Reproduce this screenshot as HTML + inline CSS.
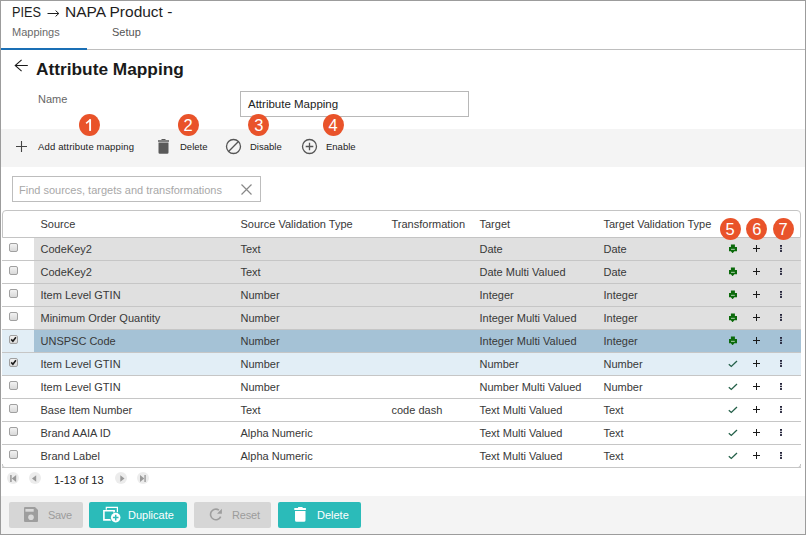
<!DOCTYPE html>
<html><head><meta charset="utf-8">
<style>
*{margin:0;padding:0;box-sizing:border-box}
html,body{width:806px;height:535px;overflow:hidden;background:#fff}
body{position:relative;font-family:"Liberation Sans",sans-serif;color:#333}
.a{position:absolute;white-space:nowrap;line-height:1}
.frame{position:absolute;left:0;top:0;width:806px;height:535px;border:1px solid #9c9c9c;z-index:50}
.badge{position:absolute;width:21px;height:21.8px;border-radius:50%;background:#e9532a;color:#fff;font-size:16.5px;line-height:23px;text-align:center;z-index:20}
.tb{font-size:9.5px;color:#222}
.bg{position:absolute;height:22px}
.dv{position:absolute;left:2px;width:799px;height:1px;background:#c6c6c6}
.cb{position:absolute;left:9px;width:9px;height:9px;border:1px solid #a0a0a0;border-radius:2px;background:linear-gradient(#f2f2f2,#d9d9d9)}
.cell{position:absolute;font-size:11px;line-height:1;white-space:nowrap;color:#383838}
.ic{position:absolute}
.btn{position:absolute;top:502px;height:26px;border-radius:2px}
.pg{position:absolute;top:472px;width:12px;height:12px;border-radius:50%;background:#ececec}
</style></head><body>
<div class="frame"></div>

<!-- header -->
<div class="a" style="left:11.7px;top:4.3px;font-size:15.5px;color:#1e1e1e;transform:scaleX(0.82);transform-origin:0 0">PIES</div>
<svg class="ic" style="left:47px;top:10px" width="13" height="7" viewBox="0 0 13 7"><path d="M0.5 3.5H11.8M8.6 0.6L11.8 3.5L8.6 6.4" fill="none" stroke="#1e1e1e" stroke-width="1"/></svg>
<div class="a" style="left:65px;top:4.3px;font-size:15.5px;color:#1e1e1e">NAPA Product -</div>
<div class="a" style="left:12px;top:26.9px;font-size:11px;color:#6a6a6a">Mappings</div>
<div class="a" style="left:112px;top:26.9px;font-size:11px;color:#555">Setup</div>
<div style="position:absolute;left:1px;top:49px;width:804px;height:1px;background:#bebebe"></div>
<div style="position:absolute;left:1px;top:48px;width:86px;height:2px;background:#1a6fb5"></div>

<!-- title -->
<svg class="ic" style="left:14px;top:59px" width="15" height="13" viewBox="0 0 15 13"><path d="M1.2 6.5H13.8M7.6 0.8L1.2 6.5L7.6 12.2" fill="none" stroke="#1a1a1a" stroke-width="1.05"/></svg>
<div class="a" style="left:36px;top:60.6px;font-size:17.3px;font-weight:bold;color:#1a1a1a">Attribute Mapping</div>
<div class="a" style="left:38px;top:93.7px;font-size:11px;color:#666">Name</div>
<div style="position:absolute;left:240px;top:91px;width:229px;height:26px;border:1px solid #b8b8b8"></div>
<div class="a" style="left:248px;top:98.6px;font-size:11.5px;color:#222">Attribute Mapping</div>

<!-- toolbar -->
<div style="position:absolute;left:1px;top:129px;width:804px;height:38px;background:#f4f4f4"></div>
<svg class="ic" style="left:16px;top:141px" width="11" height="11" viewBox="0 0 11 11"><path d="M5.5 0V11M0 5.5H11" stroke="#444" stroke-width="1.1"/></svg>
<div class="a tb" style="left:38px;top:142px;letter-spacing:0.15px">Add attribute mapping</div>
<svg class="ic" style="left:157px;top:138px" width="13" height="16" viewBox="0 0 13 16"><path d="M4.5 1H8.5V2H4.5Z M1 2.2H12V3.8H1Z M1.5 4.5H11.5V14.5Q11.5 15.8 10.2 15.8H2.8Q1.5 15.8 1.5 14.5Z" fill="#595959"/></svg>
<div class="a tb" style="left:180px;top:142px">Delete</div>
<svg class="ic" style="left:225px;top:138px" width="17" height="17" viewBox="0 0 17 17"><circle cx="8.5" cy="8.5" r="7" fill="none" stroke="#555" stroke-width="1.3"/><path d="M3.8 13.2L13.2 3.8" stroke="#555" stroke-width="1.3"/></svg>
<div class="a tb" style="left:250px;top:142px">Disable</div>
<svg class="ic" style="left:301px;top:138px" width="17" height="17" viewBox="0 0 17 17"><circle cx="8.5" cy="8.5" r="7" fill="none" stroke="#555" stroke-width="1.3"/><path d="M8.5 4.7V12.3M4.7 8.5H12.3" stroke="#555" stroke-width="1.3"/></svg>
<div class="a tb" style="left:326px;top:142px">Enable</div>

<div class="badge" style="left:78.5px;top:114.39999999999999px"><svg style="position:absolute;left:0;top:0" width="21" height="22" viewBox="0 0 21 22"><path d="M11.1 5.3V16.9" stroke="#fff" stroke-width="1.9"/><path d="M7.1 9.4L11.6 5.6" stroke="#fff" stroke-width="1.6"/></svg></div>
<div class="badge" style="left:177.7px;top:114.39999999999999px">2</div>
<div class="badge" style="left:248.3px;top:114.39999999999999px">3</div>
<div class="badge" style="left:322.5px;top:114.39999999999999px">4</div>

<!-- search -->
<div style="position:absolute;left:12px;top:176px;width:249px;height:26px;border:1px solid #bdbdbd"></div>
<div class="a" style="left:19px;top:184.7px;font-size:11px;color:#a8a8a8">Find sources, targets and transformations</div>
<svg class="ic" style="left:241px;top:184px" width="11" height="11" viewBox="0 0 11 11"><path d="M0.5 0.5L10.5 10.5M10.5 0.5L0.5 10.5" stroke="#888" stroke-width="1.2"/></svg>

<!-- table -->
<div style="position:absolute;left:2px;top:210px;width:799px;height:28px;border:1px solid #c4c4c4;border-radius:4px 4px 0 0"></div>
<div class="cell" style="left:40.5px;top:218.7px">Source</div>
<div class="cell" style="left:240.5px;top:218.7px">Source Validation Type</div>
<div class="cell" style="left:391.5px;top:218.7px">Transformation</div>
<div class="cell" style="left:479.5px;top:218.7px">Target</div>
<div class="cell" style="left:603.5px;top:218.7px">Target Validation Type</div>

<div class="bg" style="left:34px;top:238px;width:767px;background:#e0e0e0"></div>
<div class="dv" style="top:260px"></div>
<div class="cb" style="top:243px"></div>
<div class="cell" style="left:40.5px;top:244.2px">CodeKey2</div>
<div class="cell" style="left:240.5px;top:244.2px">Text</div>
<div class="cell" style="left:479.5px;top:244.2px">Date</div>
<div class="cell" style="left:603.5px;top:244.2px">Date</div>
<svg class="ic" style="left:729px;top:244px" width="9" height="10" viewBox="0 0 9 10"><path d="M1.9 0.5H5.9V2.9H8V7.2H5.3L3.9 9H3.3L1.9 7.2H0V2.9H1.9Z" fill="#0b6a0b"/><rect x="2" y="4.8" width="3.8" height="1.2" fill="#fff" fill-opacity="0.55"/></svg>
<div class="ic" style="left:756px;top:245px;width:1px;height:7px;background:#1a1a1a"></div><div class="ic" style="left:753px;top:248px;width:7px;height:1px;background:#1a1a1a"></div>
<svg class="ic" style="left:780px;top:245px" width="2" height="7" viewBox="0 0 2 7"><rect x="0" y="0" width="2" height="1.8" fill="#24243a"/><rect x="0" y="2.7" width="2" height="1.5" fill="#24243a"/><rect x="0" y="5.1" width="2" height="1.8" fill="#24243a"/></svg>
<div class="bg" style="left:34px;top:261px;width:767px;background:#e0e0e0"></div>
<div class="dv" style="top:283px"></div>
<div class="cb" style="top:266px"></div>
<div class="cell" style="left:40.5px;top:267.2px">CodeKey2</div>
<div class="cell" style="left:240.5px;top:267.2px">Text</div>
<div class="cell" style="left:479.5px;top:267.2px">Date Multi Valued</div>
<div class="cell" style="left:603.5px;top:267.2px">Date</div>
<svg class="ic" style="left:729px;top:267px" width="9" height="10" viewBox="0 0 9 10"><path d="M1.9 0.5H5.9V2.9H8V7.2H5.3L3.9 9H3.3L1.9 7.2H0V2.9H1.9Z" fill="#0b6a0b"/><rect x="2" y="4.8" width="3.8" height="1.2" fill="#fff" fill-opacity="0.55"/></svg>
<div class="ic" style="left:756px;top:268px;width:1px;height:7px;background:#1a1a1a"></div><div class="ic" style="left:753px;top:271px;width:7px;height:1px;background:#1a1a1a"></div>
<svg class="ic" style="left:780px;top:268px" width="2" height="7" viewBox="0 0 2 7"><rect x="0" y="0" width="2" height="1.8" fill="#24243a"/><rect x="0" y="2.7" width="2" height="1.5" fill="#24243a"/><rect x="0" y="5.1" width="2" height="1.8" fill="#24243a"/></svg>
<div class="bg" style="left:34px;top:284px;width:767px;background:#e0e0e0"></div>
<div class="dv" style="top:306px"></div>
<div class="cb" style="top:289px"></div>
<div class="cell" style="left:40.5px;top:290.2px">Item Level GTIN</div>
<div class="cell" style="left:240.5px;top:290.2px">Number</div>
<div class="cell" style="left:479.5px;top:290.2px">Integer</div>
<div class="cell" style="left:603.5px;top:290.2px">Integer</div>
<svg class="ic" style="left:729px;top:290px" width="9" height="10" viewBox="0 0 9 10"><path d="M1.9 0.5H5.9V2.9H8V7.2H5.3L3.9 9H3.3L1.9 7.2H0V2.9H1.9Z" fill="#0b6a0b"/><rect x="2" y="4.8" width="3.8" height="1.2" fill="#fff" fill-opacity="0.55"/></svg>
<div class="ic" style="left:756px;top:291px;width:1px;height:7px;background:#1a1a1a"></div><div class="ic" style="left:753px;top:294px;width:7px;height:1px;background:#1a1a1a"></div>
<svg class="ic" style="left:780px;top:291px" width="2" height="7" viewBox="0 0 2 7"><rect x="0" y="0" width="2" height="1.8" fill="#24243a"/><rect x="0" y="2.7" width="2" height="1.5" fill="#24243a"/><rect x="0" y="5.1" width="2" height="1.8" fill="#24243a"/></svg>
<div class="bg" style="left:34px;top:307px;width:767px;background:#e0e0e0"></div>
<div class="dv" style="top:329px"></div>
<div class="cb" style="top:312px"></div>
<div class="cell" style="left:40.5px;top:313.2px">Minimum Order Quantity</div>
<div class="cell" style="left:240.5px;top:313.2px">Number</div>
<div class="cell" style="left:479.5px;top:313.2px">Integer Multi Valued</div>
<div class="cell" style="left:603.5px;top:313.2px">Integer</div>
<svg class="ic" style="left:729px;top:313px" width="9" height="10" viewBox="0 0 9 10"><path d="M1.9 0.5H5.9V2.9H8V7.2H5.3L3.9 9H3.3L1.9 7.2H0V2.9H1.9Z" fill="#0b6a0b"/><rect x="2" y="4.8" width="3.8" height="1.2" fill="#fff" fill-opacity="0.55"/></svg>
<div class="ic" style="left:756px;top:314px;width:1px;height:7px;background:#1a1a1a"></div><div class="ic" style="left:753px;top:317px;width:7px;height:1px;background:#1a1a1a"></div>
<svg class="ic" style="left:780px;top:314px" width="2" height="7" viewBox="0 0 2 7"><rect x="0" y="0" width="2" height="1.8" fill="#24243a"/><rect x="0" y="2.7" width="2" height="1.5" fill="#24243a"/><rect x="0" y="5.1" width="2" height="1.8" fill="#24243a"/></svg>
<div class="bg" style="left:2px;top:330px;width:32px;background:#e2eef6"></div>
<div class="bg" style="left:34px;top:330px;width:767px;background:#a5c2d6"></div>
<div class="dv" style="top:352px"></div>
<div class="cb" style="top:335px"><svg style="position:absolute;left:0;top:0" width="7" height="7" viewBox="0 0 7 7"><path d="M1.2 3.4L2.9 5.2L5.9 1.2" fill="none" stroke="#1a1a1a" stroke-width="1.6"/></svg></div>
<div class="cell" style="left:40.5px;top:336.2px">UNSPSC Code</div>
<div class="cell" style="left:240.5px;top:336.2px">Number</div>
<div class="cell" style="left:479.5px;top:336.2px">Integer Multi Valued</div>
<div class="cell" style="left:603.5px;top:336.2px">Integer</div>
<svg class="ic" style="left:729px;top:336px" width="9" height="10" viewBox="0 0 9 10"><path d="M1.9 0.5H5.9V2.9H8V7.2H5.3L3.9 9H3.3L1.9 7.2H0V2.9H1.9Z" fill="#0b6a0b"/><rect x="2" y="4.8" width="3.8" height="1.2" fill="#fff" fill-opacity="0.55"/></svg>
<div class="ic" style="left:756px;top:337px;width:1px;height:7px;background:#1a1a1a"></div><div class="ic" style="left:753px;top:340px;width:7px;height:1px;background:#1a1a1a"></div>
<svg class="ic" style="left:780px;top:337px" width="2" height="7" viewBox="0 0 2 7"><rect x="0" y="0" width="2" height="1.8" fill="#24243a"/><rect x="0" y="2.7" width="2" height="1.5" fill="#24243a"/><rect x="0" y="5.1" width="2" height="1.8" fill="#24243a"/></svg>
<div class="bg" style="left:2px;top:353px;width:799px;background:#e2eef6"></div>
<div class="dv" style="top:375px"></div>
<div class="cb" style="top:358px"><svg style="position:absolute;left:0;top:0" width="7" height="7" viewBox="0 0 7 7"><path d="M1.2 3.4L2.9 5.2L5.9 1.2" fill="none" stroke="#1a1a1a" stroke-width="1.6"/></svg></div>
<div class="cell" style="left:40.5px;top:359.2px">Item Level GTIN</div>
<div class="cell" style="left:240.5px;top:359.2px">Number</div>
<div class="cell" style="left:479.5px;top:359.2px">Number</div>
<div class="cell" style="left:603.5px;top:359.2px">Number</div>
<svg class="ic" style="left:728px;top:360px" width="10" height="8" viewBox="0 0 10 8"><path d="M0.8 4.2L3.3 6.4L9 1" fill="none" stroke="#235f48" stroke-width="1.3"/></svg>
<div class="ic" style="left:756px;top:360px;width:1px;height:7px;background:#1a1a1a"></div><div class="ic" style="left:753px;top:363px;width:7px;height:1px;background:#1a1a1a"></div>
<svg class="ic" style="left:780px;top:360px" width="2" height="7" viewBox="0 0 2 7"><rect x="0" y="0" width="2" height="1.8" fill="#24243a"/><rect x="0" y="2.7" width="2" height="1.5" fill="#24243a"/><rect x="0" y="5.1" width="2" height="1.8" fill="#24243a"/></svg>
<div class="dv" style="top:398px"></div>
<div class="cb" style="top:381px"></div>
<div class="cell" style="left:40.5px;top:382.2px">Item Level GTIN</div>
<div class="cell" style="left:240.5px;top:382.2px">Number</div>
<div class="cell" style="left:479.5px;top:382.2px">Number Multi Valued</div>
<div class="cell" style="left:603.5px;top:382.2px">Number</div>
<svg class="ic" style="left:728px;top:383px" width="10" height="8" viewBox="0 0 10 8"><path d="M0.8 4.2L3.3 6.4L9 1" fill="none" stroke="#235f48" stroke-width="1.3"/></svg>
<div class="ic" style="left:756px;top:383px;width:1px;height:7px;background:#1a1a1a"></div><div class="ic" style="left:753px;top:386px;width:7px;height:1px;background:#1a1a1a"></div>
<svg class="ic" style="left:780px;top:383px" width="2" height="7" viewBox="0 0 2 7"><rect x="0" y="0" width="2" height="1.8" fill="#24243a"/><rect x="0" y="2.7" width="2" height="1.5" fill="#24243a"/><rect x="0" y="5.1" width="2" height="1.8" fill="#24243a"/></svg>
<div class="dv" style="top:421px"></div>
<div class="cb" style="top:404px"></div>
<div class="cell" style="left:40.5px;top:405.2px">Base Item Number</div>
<div class="cell" style="left:240.5px;top:405.2px">Text</div>
<div class="cell" style="left:391.5px;top:405.2px">code dash</div>
<div class="cell" style="left:479.5px;top:405.2px">Text Multi Valued</div>
<div class="cell" style="left:603.5px;top:405.2px">Text</div>
<svg class="ic" style="left:728px;top:406px" width="10" height="8" viewBox="0 0 10 8"><path d="M0.8 4.2L3.3 6.4L9 1" fill="none" stroke="#235f48" stroke-width="1.3"/></svg>
<div class="ic" style="left:756px;top:406px;width:1px;height:7px;background:#1a1a1a"></div><div class="ic" style="left:753px;top:409px;width:7px;height:1px;background:#1a1a1a"></div>
<svg class="ic" style="left:780px;top:406px" width="2" height="7" viewBox="0 0 2 7"><rect x="0" y="0" width="2" height="1.8" fill="#24243a"/><rect x="0" y="2.7" width="2" height="1.5" fill="#24243a"/><rect x="0" y="5.1" width="2" height="1.8" fill="#24243a"/></svg>
<div class="dv" style="top:444px"></div>
<div class="cb" style="top:427px"></div>
<div class="cell" style="left:40.5px;top:428.2px">Brand AAIA ID</div>
<div class="cell" style="left:240.5px;top:428.2px">Alpha Numeric</div>
<div class="cell" style="left:479.5px;top:428.2px">Text Multi Valued</div>
<div class="cell" style="left:603.5px;top:428.2px">Text</div>
<svg class="ic" style="left:728px;top:429px" width="10" height="8" viewBox="0 0 10 8"><path d="M0.8 4.2L3.3 6.4L9 1" fill="none" stroke="#235f48" stroke-width="1.3"/></svg>
<div class="ic" style="left:756px;top:429px;width:1px;height:7px;background:#1a1a1a"></div><div class="ic" style="left:753px;top:432px;width:7px;height:1px;background:#1a1a1a"></div>
<svg class="ic" style="left:780px;top:429px" width="2" height="7" viewBox="0 0 2 7"><rect x="0" y="0" width="2" height="1.8" fill="#24243a"/><rect x="0" y="2.7" width="2" height="1.5" fill="#24243a"/><rect x="0" y="5.1" width="2" height="1.8" fill="#24243a"/></svg>
<div class="dv" style="top:467px"></div>
<div class="cb" style="top:450px"></div>
<div class="cell" style="left:40.5px;top:451.2px">Brand Label</div>
<div class="cell" style="left:240.5px;top:451.2px">Alpha Numeric</div>
<div class="cell" style="left:479.5px;top:451.2px">Text Multi Valued</div>
<div class="cell" style="left:603.5px;top:451.2px">Text</div>
<svg class="ic" style="left:728px;top:452px" width="10" height="8" viewBox="0 0 10 8"><path d="M0.8 4.2L3.3 6.4L9 1" fill="none" stroke="#235f48" stroke-width="1.3"/></svg>
<div class="ic" style="left:756px;top:452px;width:1px;height:7px;background:#1a1a1a"></div><div class="ic" style="left:753px;top:455px;width:7px;height:1px;background:#1a1a1a"></div>
<svg class="ic" style="left:780px;top:452px" width="2" height="7" viewBox="0 0 2 7"><rect x="0" y="0" width="2" height="1.8" fill="#24243a"/><rect x="0" y="2.7" width="2" height="1.5" fill="#24243a"/><rect x="0" y="5.1" width="2" height="1.8" fill="#24243a"/></svg>
<div style="position:absolute;left:2px;top:464px;width:799px;height:4px;border:1px solid #c6c6c6;border-top:0;border-radius:0 0 3px 3px"></div>
<div class="badge" style="left:719.5px;top:218.4px">5</div>
<div class="badge" style="left:746.3px;top:218.4px">6</div>
<div class="badge" style="left:772.5px;top:218.4px">7</div>

<!-- pagination -->
<div class="pg" style="left:7px"></div>
<svg class="ic" style="left:10px;top:475px" width="7" height="7" viewBox="0 0 7 7"><rect x="0" y="0" width="1.8" height="7" fill="#a6a6a6"/><path d="M6.2 0V7L1.8 3.5Z" fill="#999"/></svg>
<div class="pg" style="left:29px"></div>
<svg class="ic" style="left:32px;top:475px" width="5" height="7" viewBox="0 0 5 7"><path d="M4.2 0.3V6.7L0 3.5Z" fill="#999"/></svg>
<div class="a" style="left:54px;top:474.9px;font-size:11px;color:#222">1-13 of 13</div>
<div class="pg" style="left:115px"></div>
<svg class="ic" style="left:119.5px;top:475px" width="5" height="7" viewBox="0 0 5 7"><path d="M0.3 0.3V6.7L4.5 3.5Z" fill="#999"/></svg>
<div class="pg" style="left:137px"></div>
<svg class="ic" style="left:140px;top:475px" width="7" height="7" viewBox="0 0 7 7"><path d="M0 0V7L4.3 3.5Z" fill="#999"/><rect x="4.3" y="0" width="1.6" height="7" fill="#a6a6a6"/></svg>

<!-- bottom bar -->
<div style="position:absolute;left:1px;top:496px;width:804px;height:38px;background:#f4f4f4"></div>
<div class="btn" style="left:9px;width:74px;background:#d6d6d6"></div>
<svg class="ic" style="left:24px;top:507px" width="14" height="15" viewBox="0 0 14 15"><path d="M0 1Q0 0 1 0H11L14 3V14Q14 15 13 15H1Q0 15 0 14Z" fill="#9e9e9e"/><rect x="1.4" y="2" width="8.3" height="2.7" fill="#d9d9d9"/><circle cx="7" cy="10.3" r="2.8" fill="#d9d9d9"/></svg>
<div class="a" style="left:48px;top:510.3px;font-size:11px;color:#9c9c9c;letter-spacing:-0.3px">Save</div>
<div class="btn" style="left:89px;width:98px;background:#2bbbb9"></div>
<svg class="ic" style="left:102px;top:506px" width="20" height="18" viewBox="0 0 20 18"><path d="M4.3 3.7V1.3H15.4V6.5" fill="none" stroke="#fff" stroke-width="1.2"/><path d="M1.9 4.8H12.1V13.9H1.9Z" fill="none" stroke="#fff" stroke-width="1.6"/><circle cx="13.7" cy="11.6" r="5.6" fill="#2bbbb9"/><circle cx="13.7" cy="11.6" r="4.8" fill="#fff"/><path d="M13.7 8.8V14.4M10.9 11.6H16.5" stroke="#2bbbb9" stroke-width="1.5"/></svg>
<div class="a" style="left:128px;top:510.3px;font-size:11px;color:#fff">Duplicate</div>
<div class="btn" style="left:194px;width:77px;background:#d6d6d6"></div>
<svg class="ic" style="left:208px;top:507px" width="16" height="15" viewBox="0 0 16 15"><path d="M10.9 3.1A5.3 5.3 0 1 0 12.7 9.6" fill="none" stroke="#9e9e9e" stroke-width="1.6"/><path d="M9 6.8L13.9 1.8V6.8Z" fill="#9e9e9e"/></svg>
<div class="a" style="left:232px;top:510.3px;font-size:11px;color:#9c9c9c;letter-spacing:-0.2px">Reset</div>
<div class="btn" style="left:278px;width:83px;background:#2bbbb9"></div>
<svg class="ic" style="left:294px;top:507px" width="12" height="15" viewBox="0 0 12 15"><path d="M4.1 0H8.6V1.5H4.1Z M0.3 0.9H11.9V3H0.3Z M1 4.1H11.5V13.3Q11.5 14.8 10 14.8H2.5Q1 14.8 1 13.3Z" fill="#fff"/></svg>
<div class="a" style="left:317px;top:510.3px;font-size:11px;color:#fff">Delete</div>
</body></html>
